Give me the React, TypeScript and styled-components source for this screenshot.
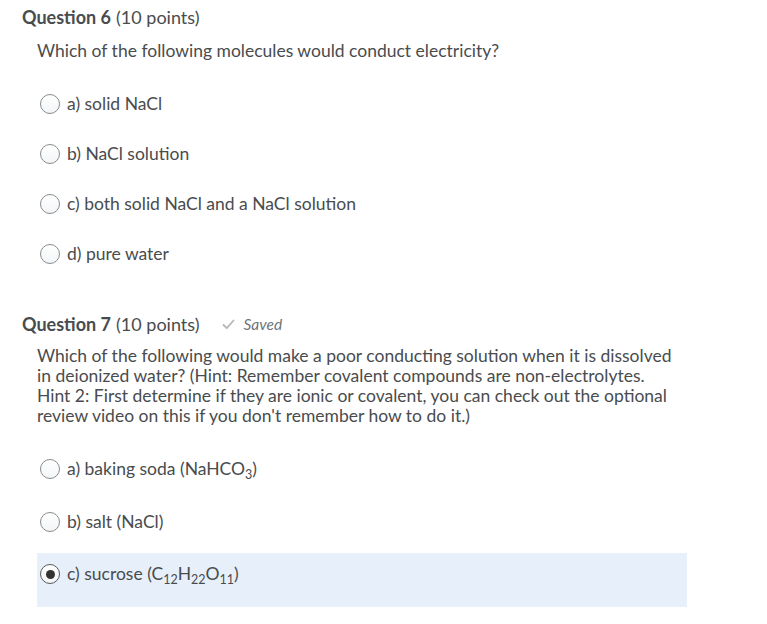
import React from "react";
import styled, { createGlobalStyle } from "styled-components";

const GlobalStyle = createGlobalStyle`
  html, body {
    margin: 0;
    padding: 0;
    background: #ffffff;
  }
  body {
    font-family: Lato, "Open Sans", "Liberation Sans", sans-serif;
    color: #494c4e;
  }
`;

const Page = styled.div`
  padding: 5px 0 20px 22px;
  width: 665px;
`;

const Question = styled.section`
  & + & {
    margin-top: 29px;
  }
`;

const Heading = styled.div`
  display: flex;
  align-items: center;
  height: 24px;
  font-size: 18px;
  line-height: 24px;
  color: #494c4e;
  strong {
    font-weight: 700;
  }
`;

const Points = styled.span`
  margin-left: 5px;
  font-weight: 400;
`;

const SavedTag = styled.span`
  display: inline-flex;
  align-items: center;
  gap: 9px;
  margin-left: 22px;
  font-size: 15.5px;
  font-style: italic;
  color: #6e7376;
`;

const Prompt = styled.p<{ $gap: number }>`
  margin: ${(p) => p.$gap}px 0 0 15px;
  max-width: 640px;
  font-size: 17.5px;
  line-height: 20px;
`;

const Options = styled.div<{ $gap: number }>`
  margin: ${(p) => p.$gap}px 0 0 15px;
  width: 650px;
  display: flex;
  flex-direction: column;
`;

const OptionRow = styled.label<{ $h: number; $selected?: boolean }>`
  display: flex;
  align-items: flex-start;
  gap: 7px;
  box-sizing: border-box;
  height: ${(p) => p.$h}px;
  padding: 11px 0 0 3px;
  background: ${(p) => (p.$selected ? "#e7f0fa" : "transparent")};
  font-size: 17.5px;
  line-height: 20px;
`;

const OptionText = styled.span`
  sub {
    font-size: 12.5px;
    line-height: 0;
    vertical-align: -4px;
  }
`;

const Radio = styled.span<{ $checked?: boolean }>`
  flex: none;
  width: 20px;
  height: 20px;
  box-sizing: border-box;
  border-radius: 50%;
  border: 1px solid ${(p) => (p.$checked ? "#565a5c" : "#868c8f")};
  background: linear-gradient(#ffffff, #f3f5f7);
  display: flex;
  align-items: center;
  justify-content: center;
  &::after {
    content: "";
    display: ${(p) => (p.$checked ? "block" : "none")};
    width: 9px;
    height: 9px;
    border-radius: 50%;
    background: #333333;
  }
`;

const Check = () => (
  <svg width="13" height="11" viewBox="0 0 13 11" fill="none">
    <path d="M1.5 6 L4.8 9.2 L11.5 1.5" stroke="#b5b8bb" strokeWidth="1.8" strokeLinecap="round" strokeLinejoin="round" />
  </svg>
);

export default function App() {
  return (
    <>
      <GlobalStyle />
      <Page>
        <Question>
          <Heading>
            <strong>Question 6</strong>
            <Points>(10 points)</Points>
          </Heading>
          <Prompt $gap={12}>Which of the following molecules would conduct electricity?</Prompt>
          <Options $gap={22}>
            <OptionRow $h={50}><Radio /><OptionText>a) solid NaCl</OptionText></OptionRow>
            <OptionRow $h={50}><Radio /><OptionText>b) NaCl solution</OptionText></OptionRow>
            <OptionRow $h={50}><Radio /><OptionText>c) both solid NaCl and a NaCl solution</OptionText></OptionRow>
            <OptionRow $h={50}><Radio /><OptionText>d) pure water</OptionText></OptionRow>
          </Options>
        </Question>
        <Question>
          <Heading>
            <strong>Question 7</strong>
            <Points>(10 points)</Points>
            <SavedTag><Check />Saved</SavedTag>
          </Heading>
          <Prompt $gap={10}>
            Which of the following would make a poor conducting solution when it is dissolved in deionized
            water? (Hint: Remember covalent compounds are non-electrolytes. Hint 2: First determine if they
            are ionic or covalent, you can check out the optional review video on this if you don't remember
            how to do it.)
          </Prompt>
          <Options $gap={22}>
            <OptionRow $h={53}><Radio /><OptionText>a) baking soda (NaHCO<sub>3</sub>)</OptionText></OptionRow>
            <OptionRow $h={52}><Radio /><OptionText>b) salt (NaCl)</OptionText></OptionRow>
            <OptionRow $h={54} $selected>
              <Radio $checked />
              <OptionText>c) sucrose (C<sub>12</sub>H<sub>22</sub>O<sub>11</sub>)</OptionText>
            </OptionRow>
          </Options>
        </Question>
      </Page>
    </>
  );
}
